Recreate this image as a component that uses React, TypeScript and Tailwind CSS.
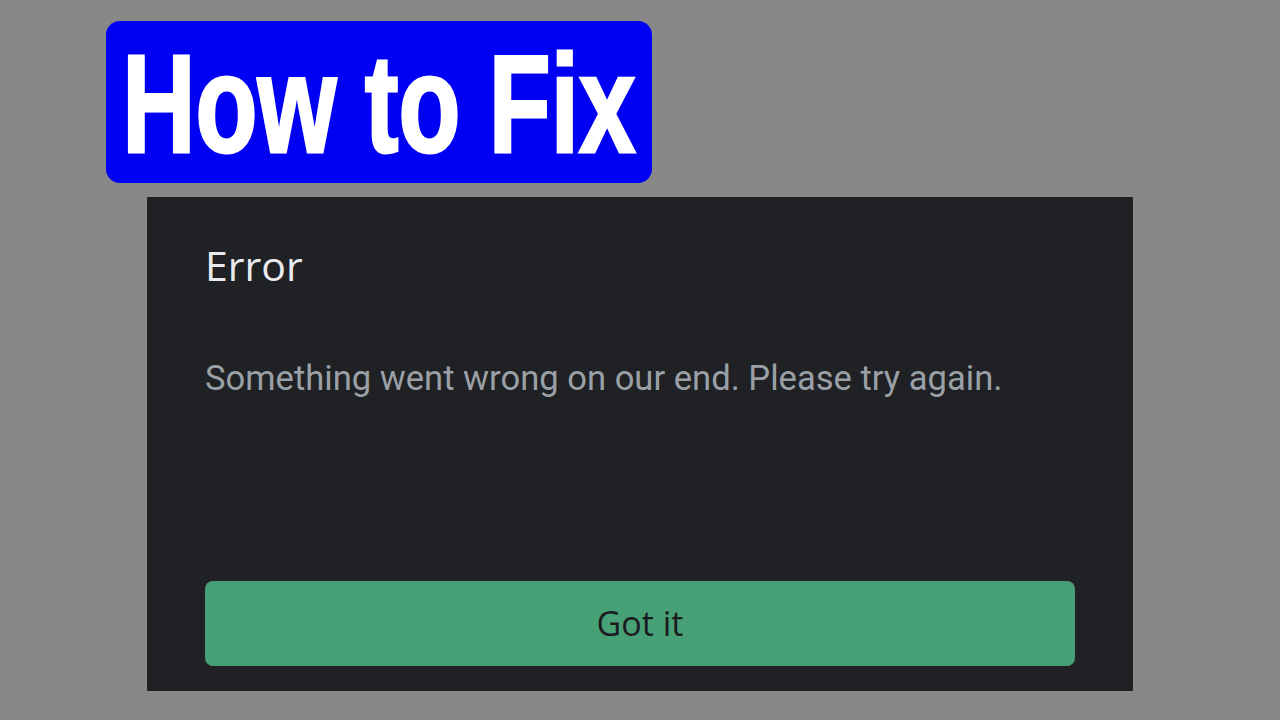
export default function App() {
  return (
    <div className="w-[1280px] h-[720px] bg-[#888888] flex flex-col overflow-hidden">
      <div className="ml-[106px] mt-[21px] w-[546px] h-[162px] rounded-[14px] bg-[#0000f5] flex items-center justify-center overflow-hidden">
        <span className="font-['Liberation_Sans',Arial,sans-serif] text-white font-bold text-[140px] leading-none whitespace-nowrap inline-block scale-x-[0.725] [-webkit-text-stroke:3px_white] mt-[4px]">
          How to Fix
        </span>
      </div>
      <div className="ml-[147px] mt-[14px] w-[986px] h-[494px] bg-[#202124] flex flex-col px-[58px] font-['Roboto','Open_Sans',sans-serif]">
        <div className="mt-[43px] text-[41px] leading-[50px] text-[#e8eaed] font-['Open_Sans',Roboto,sans-serif]">
          Error
        </div>
        <div className="mt-[68px] text-[34.6px] leading-[40px] text-[#9aa0a6] whitespace-nowrap">
          Something went wrong on our end. Please try again.
        </div>
        <div className="mt-auto mb-[25px] h-[85px] rounded-[8px] bg-[#48a077] flex items-center justify-center text-[34px] text-[#1b1c1e] font-['Open_Sans',Roboto,sans-serif]">
          Got it
        </div>
      </div>
    </div>
  );
}
